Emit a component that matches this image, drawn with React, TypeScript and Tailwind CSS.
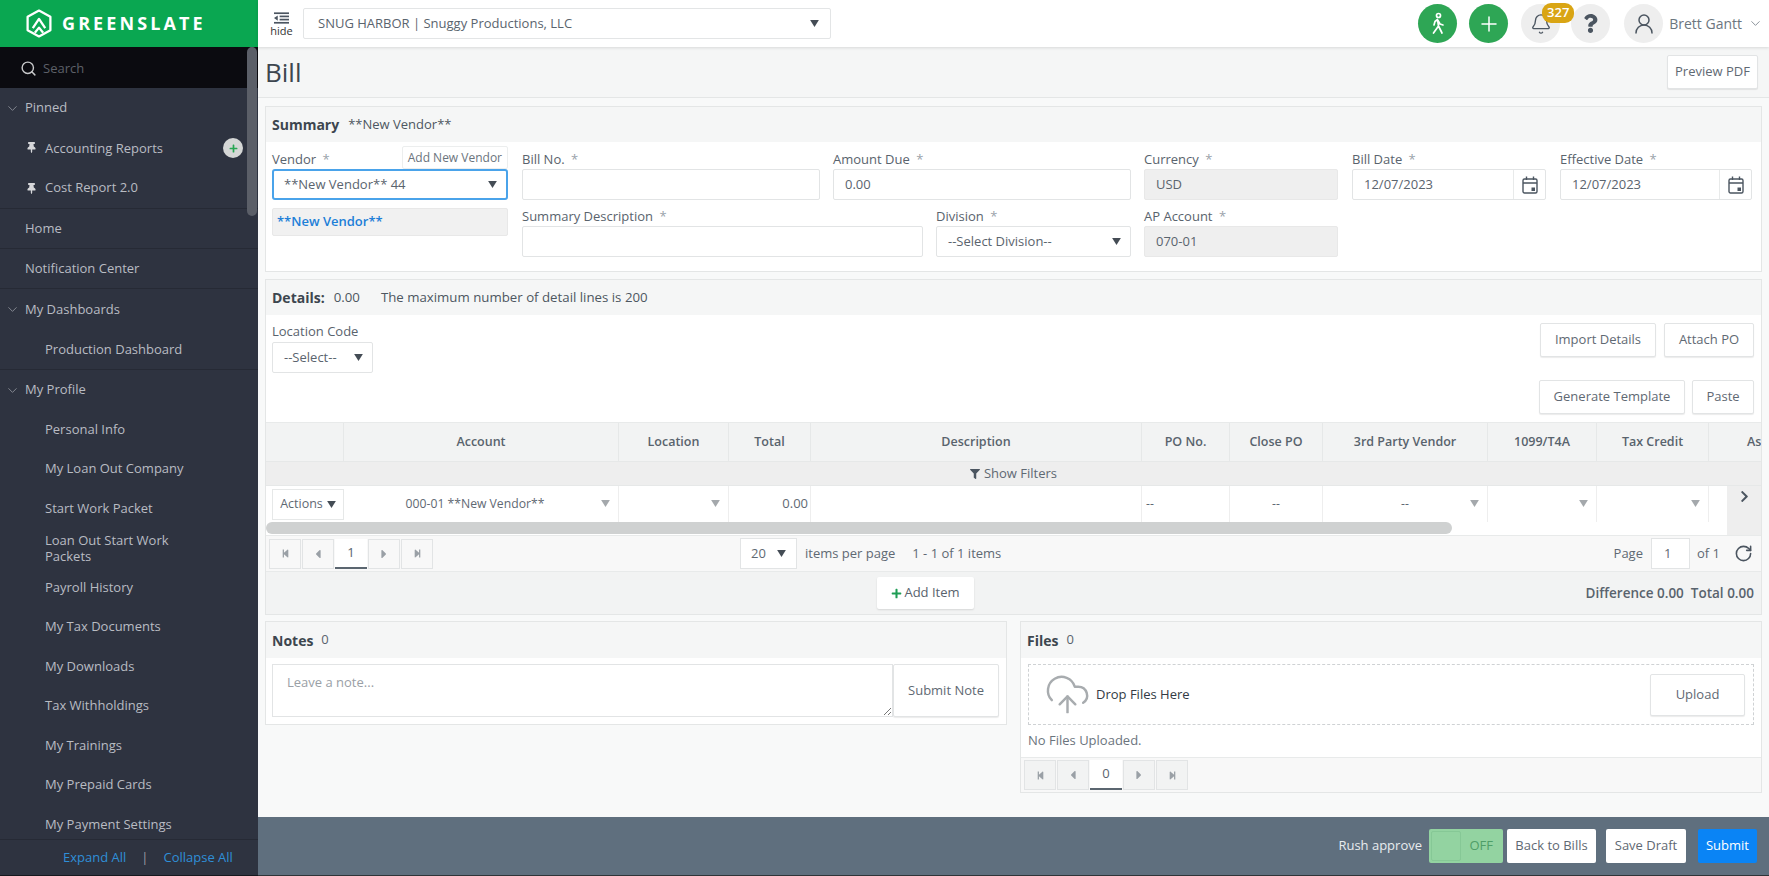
import React from 'react';
import {
  FaCaretLeft,
  FaCaretRight,
  FaChevronRight,
  FaFilter,
  FaPlus,
  FaQuestion,
  FaStepBackward,
  FaStepForward,
  FaThumbtack,
} from 'react-icons/fa';
import { Bell, ChevronDown, CloudUpload, Plus, RotateCw, Search, UserRound } from 'lucide-react';

type NavItem = { label: string; kind: 'group' | 'top' | 'child' | 'pin'; divider?: boolean; add?: boolean };

const navItems: NavItem[] = [
  { label: 'Pinned', kind: 'group' },
  { label: 'Accounting Reports', kind: 'pin', add: true },
  { label: 'Cost Report 2.0', kind: 'pin', divider: true },
  { label: 'Home', kind: 'top', divider: true },
  { label: 'Notification Center', kind: 'top', divider: true },
  { label: 'My Dashboards', kind: 'group' },
  { label: 'Production Dashboard', kind: 'child', divider: true },
  { label: 'My Profile', kind: 'group' },
  { label: 'Personal Info', kind: 'child' },
  { label: 'My Loan Out Company', kind: 'child' },
  { label: 'Start Work Packet', kind: 'child' },
  { label: 'Loan Out Start Work Packets', kind: 'child' },
  { label: 'Payroll History', kind: 'child' },
  { label: 'My Tax Documents', kind: 'child' },
  { label: 'My Downloads', kind: 'child' },
  { label: 'Tax Withholdings', kind: 'child' },
  { label: 'My Trainings', kind: 'child' },
  { label: 'My Prepaid Cards', kind: 'child' },
  { label: 'My Payment Settings', kind: 'child' },
];

const Caret = ({ className = 'text-[#444c55]' }: { className?: string }) => (
  <svg width="9" height="7" viewBox="0 0 10 8" fill="currentColor" className={`shrink-0 ${className}`}>
    <path d="M0 0H10L5 8Z" />
  </svg>
);

const Logo = () => (
  <svg width="26" height="29" viewBox="0 0 25 28" fill="none" stroke="white" strokeWidth="2.2" strokeLinejoin="round">
    <path d="M12.5 1.5 23.5 7.5V20.5L12.5 26.5 1.5 20.5V7.5Z" />
    <path d="M6.5 18.5 12.5 9.5 18.5 18.5" />
    <path d="M8.5 23 12.5 18 16.5 23" />
  </svg>
);

const WalkerIcon = () => (
  <svg width="20" height="24" viewBox="0 0 20 24" fill="none" stroke="white" strokeWidth="1.7" strokeLinecap="round" strokeLinejoin="round">
    <circle cx="10.5" cy="3.5" r="2" />
    <path d="M9.5 7.5 7 9.5 6 13M9.5 7.5 10.5 14 14 21M10.5 14 8 17.5 5.5 21M10 8.5 12 12 15 13" />
  </svg>
);

const Sidebar = () => (
  <aside className="relative flex h-full w-[258px] shrink-0 flex-col overflow-hidden border-b border-[#16181e] bg-[#2e3340] text-[13px] text-[#b9bcc3]">
    <div className="flex h-[47px] shrink-0 items-center gap-[10px] bg-[#0aa751] pl-[26px]">
      <Logo />
      <span className="text-[18px] font-bold tracking-[0.172em] text-white">GREENSLATE</span>
    </div>
    <div className="flex h-[41px] shrink-0 items-center gap-[6px] bg-[#0b0b10] pl-[20px] pt-[2px] text-[#5d6068]">
      <Search size={17} className="text-[#c9cacc]" />
      <span>Search</span>
    </div>
    <nav className="min-h-0 flex-1 overflow-hidden">
      {navItems.map((item, i) => (
        <div
          key={item.label}
          className={`relative flex items-center ${i < 7 ? 'h-[40.3px]' : 'h-[39.5px]'} ${item.divider ? 'border-b border-[#262a35]' : ''} ${
            item.kind === 'child' || item.kind === 'pin' ? 'pl-[45px]' : 'pl-[25px]'
          }`}
        >
          {item.kind === 'group' && (
            <ChevronDown size={15} strokeWidth={1.25} className="absolute left-[5px] top-[13px] text-[#9a9da5]" />
          )}
          {item.kind === 'pin' && (
            <FaThumbtack size={11} className="absolute left-[26px] top-[14px] text-[#d6d7da]" />
          )}
          <span className={item.label.startsWith('Loan Out') ? 'w-[150px] leading-[16px]' : ''}>{item.label}</span>
          {item.add && (
            <span className="absolute left-[223px] top-[10px] flex h-[20px] w-[20px] items-center justify-center rounded-full bg-[#d5d7d6]">
              <FaPlus size={9} className="text-[#27a652]" />
            </span>
          )}
        </div>
      ))}
    </nav>
    <div className="flex h-[36px] shrink-0 items-center border-t border-[#262a35] pl-[63px] text-[#2f8fd8]">
      <span>Expand All</span>
      <span className="ml-[15px] mr-[15px] text-[#9a9da5]">|</span>
      <span>Collapse All</span>
    </div>
    <div className="absolute left-[247px] top-[47px] h-[169px] w-[10px] rounded-full bg-[#5b5f68]" />
  </aside>
);

const HideIcon = () => (
  <svg width="15" height="12" viewBox="0 0 16 12" fill="#4b5560">
    <rect x="0" y="0" width="16" height="1.8" />
    <rect x="6" y="3.4" width="10" height="1.8" />
    <rect x="6" y="6.8" width="10" height="1.8" />
    <rect x="0" y="10.2" width="16" height="1.8" />
    <path d="M4 3.2V8.8L0 6Z" />
  </svg>
);

const TopBar = () => (
  <header className="z-10 flex h-[47px] shrink-0 items-center bg-white shadow-[0_1px_3px_rgba(0,0,0,0.12)]">
    <div className="flex w-[45px] flex-col items-center pl-[2px] pt-[2px] text-[11px] leading-[13px] text-[#333]">
      <HideIcon />
      <span>hide</span>
    </div>
    <div className="flex h-[31px] w-[528px] items-center justify-between rounded-[2px] border border-[#e3e5e6] pl-[14px] pr-[11px] text-[13px] text-[#5a646e]">
      <span>SNUG HARBOR | Snuggy Productions, LLC</span>
      <Caret />
    </div>
    <div className="ml-auto flex items-center pr-[6px]">
      <span className="flex h-[39px] w-[39px] items-center justify-center rounded-full bg-[#2ea655]">
        <WalkerIcon />
      </span>
      <span className="ml-[12px] flex h-[39px] w-[39px] items-center justify-center rounded-full bg-[#2ea655] text-white">
        <Plus size={24} strokeWidth={1.5} />
      </span>
      <span className="relative ml-[13px] flex h-[39px] w-[39px] items-center justify-center rounded-full bg-[#eeeeee] text-[#4b5560]">
        <Bell size={22} strokeWidth={1.5} />
        <span className="absolute left-[21px] top-[-1px] flex h-[20px] w-[32px] items-center justify-center rounded-[9px] bg-[#d9a514] text-[13px] font-semibold text-white">
          327
        </span>
      </span>
      <span className="ml-[11px] flex h-[39px] w-[39px] items-center justify-center rounded-full bg-[#eeeeee] text-[#4b5560]">
        <FaQuestion size={19} />
      </span>
      <span className="ml-[14px] flex h-[39px] w-[39px] items-center justify-center rounded-full bg-[#eeeeee] text-[#4b5560]">
        <UserRound size={24} strokeWidth={1.5} />
      </span>
      <span className="ml-[6px] text-[14px] text-[#6c7680]">Brett Gantt</span>
      <ChevronDown size={15} strokeWidth={1.25} className="ml-[6px] text-[#6c7680]" />
    </div>
  </header>
);

const Label = ({ text }: { text: string }) => (
  <span className="text-[13px] leading-[20px] text-[#59636d]">
    {text} <span className="ml-[3px] text-[#9aa2aa]">*</span>
  </span>
);

const Field = ({ label, width, children }: { label: string; width: string; children: React.ReactNode }) => (
  <div className={`flex flex-col ${width}`}>
    <Label text={label} />
    {children}
  </div>
);

const inputCls = 'flex h-[31px] items-center rounded-[2px] border border-[#e2e4e5] bg-white px-[11px] text-[13px] text-[#5a646e]';
const readonlyCls = 'flex h-[31px] items-center rounded-[2px] border border-[#e8e8e8] bg-[#efefef] px-[11px] text-[13px] text-[#5a646e]';

const CalendarIcon = () => (
  <svg width="16" height="18" viewBox="0 0 16 18" fill="none" stroke="#4b5560" strokeWidth="1.4">
    <rect x="1" y="3" width="14" height="14" rx="1.5" />
    <path d="M1 7H15M4.5 0.5V4M11.5 0.5V4" />
    <rect x="9.5" y="11.5" width="3.5" height="3.5" fill="#4b5560" stroke="none" />
  </svg>
);

const DateInput = ({ value }: { value: string }) => (
  <div className="flex h-[31px] items-center rounded-[2px] border border-[#e2e4e5] bg-white text-[13px] text-[#5a646e]">
    <span className="flex-1 pl-[11px]">{value}</span>
    <span className="flex h-full w-[32px] items-center justify-center border-l border-[#e8eaea]">
      <CalendarIcon />
    </span>
  </div>
);

const SelectBox = ({ text, className }: { text: string; className: string }) => (
  <div className={`flex h-[31px] items-center justify-between rounded-[2px] border border-[#e2e4e5] bg-white pl-[11px] pr-[9px] text-[13px] text-[#5a646e] ${className}`}>
    <span>{text}</span>
    <Caret />
  </div>
);

const SummaryPanel = () => (
  <section className="border border-[#e4e6e6] bg-white">
    <div className="flex h-[35px] items-center gap-[9px] bg-[#f5f6f6] pl-[6px] text-[13px] text-[#4d5761]">
      <span className="text-[14px] font-bold text-[#3d464f]">Summary</span>
      <span>**New Vendor**</span>
    </div>
    <div className="flex h-[129px] gap-[14px] pl-[6px] pt-[7px]">
      <div className="flex w-[236px] flex-col">
        <div className="flex h-[20px] items-start justify-between">
          <Label text="Vendor" />
          <span className="mt-[-3px] flex h-[23px] items-center rounded-[2px] border border-[#eceeee] px-[5px] text-[12px] text-[#6b747d]">
            Add New Vendor
          </span>
        </div>
        <div className="flex h-[31px] items-center justify-between rounded-[3px] border-2 border-[#4aa3ea] bg-white pl-[10px] pr-[9px] text-[13px] text-[#5a646e]">
          <span>**New Vendor** 44</span>
          <Caret />
        </div>
        <div className="mt-[8px] flex h-[28px] items-center rounded-[2px] border border-[#e8e8e8] bg-[#f1f1f1] pl-[4px] text-[13px] font-semibold text-[#1d7fd8]">
          **New Vendor**
        </div>
      </div>
      <div className="flex flex-col gap-[6px]">
        <div className="flex gap-[13px]">
          <Field label="Bill No." width="w-[298px]">
            <div className={inputCls} />
          </Field>
          <Field label="Amount Due" width="w-[298px]">
            <div className={inputCls}>0.00</div>
          </Field>
          <Field label="Currency" width="w-[194px]">
            <div className={readonlyCls}>USD</div>
          </Field>
          <Field label="Bill Date" width="ml-[1px] w-[194px]">
            <DateInput value="12/07/2023" />
          </Field>
          <Field label="Effective Date" width="ml-[1px] w-[192px]">
            <DateInput value="12/07/2023" />
          </Field>
        </div>
        <div className="flex gap-[13px]">
          <Field label="Summary Description" width="w-[401px]">
            <div className={inputCls} />
          </Field>
          <Field label="Division" width="w-[195px]">
            <SelectBox text="--Select Division--" className="w-full" />
          </Field>
          <Field label="AP Account" width="w-[194px]">
            <div className={readonlyCls}>070-01</div>
          </Field>
        </div>
      </div>
    </div>
  </section>
);

const OutlineButton = ({ text, className }: { text: string; className: string }) => (
  <span className={`flex items-center justify-center rounded-[2px] border border-[#e2e4e5] bg-white text-[13px] text-[#5f6973] shadow-[0_1px_1px_rgba(0,0,0,0.08)] ${className}`}>
    {text}
  </span>
);

const columns = [
  { label: '', width: 'w-[78px]' },
  { label: 'Account', width: 'w-[275px]' },
  { label: 'Location', width: 'w-[110px]' },
  { label: 'Total', width: 'w-[82px]' },
  { label: 'Description', width: 'w-[331px]' },
  { label: 'PO No.', width: 'w-[88px]' },
  { label: 'Close PO', width: 'w-[93px]' },
  { label: '3rd Party Vendor', width: 'w-[165px]' },
  { label: '1099/T4A', width: 'w-[109px]' },
  { label: 'Tax Credit', width: 'w-[112px]' },
  { label: 'Assign', width: 'w-[116px]' },
];

const CellCaret = () => (
  <span className="absolute right-[8px] top-[14px] flex">
    <Caret className="text-[#a4a8ac]" />
  </span>
);

const Pager = ({ value, dim }: { value: string; dim?: boolean }) => {
  const box = `flex h-[30px] w-[32px] items-center justify-center border border-[#e2e4e5] text-[#9aa0a6] ${dim ? 'bg-[#f2f3f3]' : 'bg-[#f8f8f8]'}`;
  return (
    <div className="flex items-center gap-[1px]">
      <span className={box}><FaStepBackward size={9} /></span>
      <span className={box}><FaCaretLeft size={14} /></span>
      <span className="flex h-[30px] w-[32px] items-center justify-center border-b-2 border-[#5b6670] bg-white text-[13px] text-[#5a646e]">
        {value}
      </span>
      <span className={box}><FaCaretRight size={14} /></span>
      <span className={box}><FaStepForward size={9} /></span>
    </div>
  );
};

const DetailsPanel = () => (
  <section className="mt-[7px] border border-[#e4e6e6] bg-white">
    <div className="flex h-[35px] items-center bg-[#f5f6f6] pl-[6px] text-[13.25px] text-[#4d5761]">
      <span className="text-[14px] font-bold text-[#3d464f]">Details:</span>
      <span className="ml-[9px]">0.00</span>
      <span className="ml-[21px]">The maximum number of detail lines is 200</span>
    </div>
    <div className="flex h-[107px] justify-between pl-[6px] pr-[7px]">
      <div className="flex flex-col pt-[6px]">
        <span className="text-[13px] leading-[21px] text-[#59636d]">Location Code</span>
        <SelectBox text="--Select--" className="w-[101px]" />
      </div>
      <div className="flex flex-col items-end pt-[8px]">
        <div className="flex gap-[8px]">
          <OutlineButton text="Import Details" className="h-[34px] w-[116px]" />
          <OutlineButton text="Attach PO" className="h-[34px] w-[90px]" />
        </div>
        <div className="mt-[23px] flex gap-[7px]">
          <OutlineButton text="Generate Template" className="h-[34px] w-[146px]" />
          <OutlineButton text="Paste" className="h-[34px] w-[62px]" />
        </div>
      </div>
    </div>

    {/* grid: columns run past the panel edge and get clipped */}
    <div className="relative overflow-hidden">
      <div className="flex h-[39px] border-t border-[#e8eaea] bg-[#f2f3f3] text-[12.5px] font-semibold text-[#59636d]">
        {columns.map((col) => (
          <div key={col.label || 'actions'} className={`flex shrink-0 items-center justify-center border-r border-[#e6e8e8] ${col.width}`}>
            {col.label}
          </div>
        ))}
      </div>
      <div className="flex h-[25px] items-center justify-center gap-[4px] border-y border-[#e6e8e8] bg-[#eeeeee] text-[13px] text-[#5f6973]">
        <FaFilter size={10} className="text-[#4b5560]" />
        <span>Show Filters</span>
      </div>
      <div className="flex h-[36px] bg-white text-[12.2px] text-[#5f6973]">
        <div className="flex w-[78px] shrink-0 items-center pl-[6px]">
          <span className="flex h-[31px] w-[72px] items-center justify-center gap-[4px] border border-[#e6e8e8] text-[12.5px]">
            Actions <Caret />
          </span>
        </div>
        <div className="relative flex w-[275px] shrink-0 items-center justify-center border-r border-[#eeeeee] pr-[12px]">
          000-01 **New Vendor**
          <CellCaret />
        </div>
        <div className="relative w-[110px] shrink-0 border-r border-[#eeeeee]">
          <CellCaret />
        </div>
        <div className="flex w-[82px] shrink-0 items-center justify-end border-r border-[#eeeeee] pr-[2px] text-[13px]">0.00</div>
        <div className="w-[331px] shrink-0 border-r border-[#eeeeee]" />
        <div className="flex w-[88px] shrink-0 items-center border-r border-[#eeeeee] pl-[4px]">--</div>
        <div className="flex w-[93px] shrink-0 items-center justify-center border-r border-[#eeeeee]">--</div>
        <div className="relative flex w-[165px] shrink-0 items-center justify-center border-r border-[#eeeeee]">
          --
          <CellCaret />
        </div>
        <div className="relative w-[109px] shrink-0 border-r border-[#eeeeee]">
          <CellCaret />
        </div>
        <div className="relative w-[112px] shrink-0 border-r border-[#eeeeee]">
          <CellCaret />
        </div>
      </div>
      <div className="h-[13px] bg-white">
        <div className="h-[12px] w-[1186px] rounded-full bg-[#cfd1d1]" />
      </div>
      <div className="absolute bottom-0 right-0 top-[64px] flex w-[34px] justify-center bg-[#eeeeee] pt-[4px]">
        <FaChevronRight size={13} className="text-[#4b5560]" />
      </div>
    </div>

    <div className="flex h-[36px] items-center border-t border-[#e8eaea] bg-[#f8f8f8] pl-[3px] pr-[8px] text-[13px] text-[#5f6973]">
      <Pager value="1" />
      <div className="ml-[307px] flex h-[31px] w-[57px] items-center justify-between border border-[#e2e4e5] bg-white px-[10px]">
        <span>20</span>
        <Caret />
      </div>
      <span className="ml-[8px]">items per page</span>
      <span className="ml-[17px]">1 - 1 of 1 items</span>
      <span className="ml-auto">Page</span>
      <span className="ml-[8px] flex h-[31px] w-[39px] items-center border border-[#e2e4e5] bg-white pl-[12px]">1</span>
      <span className="ml-[7px]">of 1</span>
      <RotateCw size={19} strokeWidth={2} className="ml-[14px] text-[#4b5560]" />
    </div>
    <div className="relative flex h-[43px] items-center justify-end border-t border-[#e8eaea] bg-[#f2f3f3] pr-[7px] text-[13.5px] font-semibold text-[#59636d]">
      <span className="absolute left-[611px] top-[5px] flex h-[32px] w-[97px] items-center justify-center gap-[2px] rounded-[2px] bg-white text-[13px] font-normal shadow-[0_1px_2px_rgba(0,0,0,0.12)]">
        <FaPlus size={11} className="text-[#1f9d55]" /> Add Item
      </span>
      <span>Difference 0.00</span>
      <span className="ml-[7px]">Total 0.00</span>
    </div>
  </section>
);

const NotesPanel = () => (
  <section className="h-[104px] w-[742px] border border-[#e4e6e6] bg-white">
    <div className="flex h-[36px] items-center gap-[8px] bg-[#f5f6f6] pl-[6px] text-[13px] text-[#59636d]">
      <span className="text-[14px] font-bold text-[#3d464f]">Notes</span>
      <span>0</span>
    </div>
    <div className="flex pl-[6px] pt-[6px]">
      <div className="relative h-[53px] w-[621px] border border-[#e2e4e5] px-[14px] pt-[8px] text-[13px] text-[#9aa0a6]">
        Leave a note...
        <svg className="absolute bottom-[1px] right-[1px]" width="8" height="8" viewBox="0 0 8 8" stroke="#777">
          <path d="M1 8 8 1M5 8 8 5" />
        </svg>
      </div>
      <OutlineButton text="Submit Note" className="h-[53px] w-[106px]" />
    </div>
  </section>
);

const FilesPanel = () => (
  <section className="h-[172px] w-[742px] border border-[#e4e6e6] bg-white">
    <div className="flex h-[36px] items-center gap-[8px] bg-[#f5f6f6] pl-[6px] text-[13px] text-[#59636d]">
      <span className="text-[14px] font-bold text-[#3d464f]">Files</span>
      <span>0</span>
    </div>
    <div className="mx-[7px] mt-[6px] flex h-[61px] items-center justify-between border border-dashed border-[#cfd2d4] pl-[15px] pr-[8px]">
      <div className="flex items-center gap-[5px] text-[13px] text-[#333b44]">
        <CloudUpload size={47} strokeWidth={1.25} className="text-[#a8acaf]" />
        <span>Drop Files Here</span>
      </div>
      <OutlineButton text="Upload" className="h-[42px] w-[95px]" />
    </div>
    <div className="flex h-[32px] items-center pl-[7px] text-[13px] text-[#6b747d]">No Files Uploaded.</div>
    <div className="flex h-[35px] items-center border-t border-[#e8eaea] bg-[#f8f8f8] pl-[3px]">
      <Pager value="0" dim />
    </div>
  </section>
);

const BottomBar = () => (
  <footer className="flex h-[59px] shrink-0 items-center justify-end border-b border-[#2f3438] bg-[#5f6f7e] pr-[12px] text-[13px]">
    <span className="text-[#e8ecef]">Rush approve</span>
    <span className="ml-[7px] flex h-[34px] w-[74px] items-center rounded-[2px] bg-[#93d3a1] p-[2px] pr-[10px] text-[#4f9e68]">
      <span className="h-full w-[30px] rounded-[2px] border border-[#86c896]" />
      <span className="ml-auto">OFF</span>
    </span>
    <span className="ml-[4px] flex h-[34px] w-[89px] items-center justify-center rounded-[2px] bg-white text-[#5f6973]">Back to Bills</span>
    <span className="ml-[10px] flex h-[34px] w-[80px] items-center justify-center rounded-[2px] bg-white text-[#5f6973]">Save Draft</span>
    <span className="ml-[12px] flex h-[34px] w-[59px] items-center justify-center rounded-[2px] bg-[#0a84f5] text-white">Submit</span>
  </footer>
);

const App: React.FC = () => {
  return (
    <div className="flex h-screen w-full overflow-hidden bg-[#f8f9f9] font-['Open_Sans',sans-serif]">
      <Sidebar />
      <main className="flex min-w-0 flex-1 flex-col">
        <TopBar />
        <div className="min-h-0 flex-1 overflow-hidden">
          <div className="flex h-[51px] items-center justify-between border-b border-[#e4e6e6] bg-[#f5f6f6] pl-[7px] pr-[11px]">
            <h1 className="text-[26px] font-normal text-[#3d464f]">Bill</h1>
            <OutlineButton text="Preview PDF" className="h-[34px] w-[91px]" />
          </div>
          <div className="pl-[7px] pr-[7px] pt-[8px]">
            <SummaryPanel />
            <DetailsPanel />
            <div className="mt-[6px] flex items-start justify-between">
              <NotesPanel />
              <FilesPanel />
            </div>
          </div>
        </div>
        <BottomBar />
      </main>
    </div>
  );
};

export default App;
